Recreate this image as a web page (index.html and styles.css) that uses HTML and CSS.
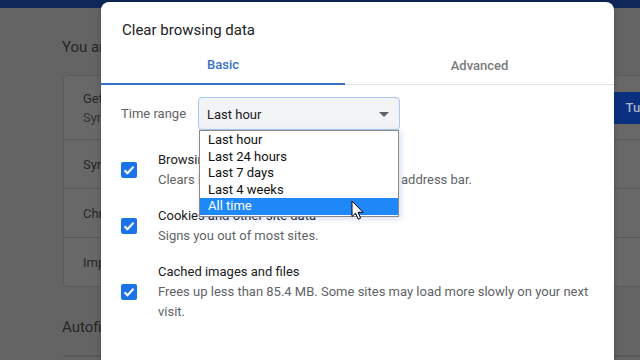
FILE: index.html
```html
<!DOCTYPE html>
<html>
<head>
<meta charset="utf-8">
<link rel="stylesheet" href="styles.css">
</head>
<body>
<div class="page">
  <div class="topbar"></div>
  <div class="main">
    <div class="section-title">You and Google</div>
    <div class="card">
      <div class="row row-tall">
        <div class="row-text">
          <div>Get Google smarts in Chrome</div>
          <div>Sync and personalize Chrome across your devices</div>
        </div>
        <div class="sync-btn">Turn on sync...</div>
      </div>
      <div class="row">Sync and Google services</div>
      <div class="row">Chrome name and picture</div>
      <div class="row">Import bookmarks and settings</div>
    </div>
    <div class="section-title section-two">Autofill</div>
    <div class="card"></div>
  </div>
</div>

<div class="dialog">
  <div class="dialog-title">Clear browsing data</div>
  <div class="tabs">
    <div class="tab tab-basic active">Basic</div>
    <div class="tab tab-adv">Advanced</div>
  </div>
  <div class="dialog-body">
    <div class="range-row">
      <span class="range-label">Time range</span>
      <div class="select-wrap">
        <div class="select">
          <span>Last hour</span>
          <svg class="arrow" width="10" height="5" viewBox="0 0 10 5"><path d="M0 0H10L5 5Z" fill="#5f6368"/></svg>
        </div>
        <ul class="listbox">
          <li>Last hour</li>
          <li>Last 24 hours</li>
          <li>Last 7 days</li>
          <li>Last 4 weeks</li>
          <li class="sel">All time</li>
        </ul>
      </div>
    </div>

    <div class="item">
      <div class="check"><svg width="12" height="10" viewBox="0 0 12 10"><path d="M1.5 5.2L4.5 8.2L10.5 1.8" fill="none" stroke="#fff" stroke-width="2"/></svg></div>
      <div class="item-text">
        <div class="item-title">Browsing history</div>
        <div class="item-sub">Clears history and autocompletions in the address bar.</div>
      </div>
    </div>
    <div class="item">
      <div class="check"><svg width="12" height="10" viewBox="0 0 12 10"><path d="M1.5 5.2L4.5 8.2L10.5 1.8" fill="none" stroke="#fff" stroke-width="2"/></svg></div>
      <div class="item-text">
        <div class="item-title">Cookies and other site data</div>
        <div class="item-sub">Signs you out of most sites.</div>
      </div>
    </div>
    <div class="item">
      <div class="check"><svg width="12" height="10" viewBox="0 0 12 10"><path d="M1.5 5.2L4.5 8.2L10.5 1.8" fill="none" stroke="#fff" stroke-width="2"/></svg></div>
      <div class="item-text">
        <div class="item-title">Cached images and files</div>
        <div class="item-sub">Frees up less than 85.4 MB. Some sites may load more slowly on your next visit.</div>
      </div>
    </div>
  </div>
</div>

<svg class="cursor" width="14" height="21" viewBox="0 0 14 21">
  <path d="M1 1V16.5L4.6 13.2L7.2 19.2L9.6 18.2L7.1 12.3H12Z" fill="#fff" stroke="#000" stroke-width="1" stroke-linejoin="round"/>
</svg>
</body>
</html>
```

FILE: styles.css
```css
html, body {
  margin: 0;
  padding: 0;
}
body {
  width: 640px;
  height: 360px;
  overflow: hidden;
  background: #646464;
  font-family: Roboto, "Liberation Sans", Arial, sans-serif;
  position: relative;
}
.page {
  width: 640px;
  height: 360px;
  overflow: hidden;
}
.topbar {
  height: 8px;
  background: #0e285a;
}
.main {
  padding-left: 62px;
  padding-top: 29px;
}
.section-title {
  font-size: 15px;
  color: #262626;
  height: 20px;
  line-height: 20px;
}
.section-two {
  margin-top: 30px;
}
.card {
  margin-top: 18px;
  margin-left: 1px;
  width: 683px;
  background: #686868;
  border: 1px solid #5a5a5a;
  border-radius: 4px;
  box-sizing: border-box;
}
.row {
  height: 48px;
  display: flex;
  align-items: center;
  padding-left: 19px;
  font-size: 13px;
  color: #262626;
  border-top: 1px solid #5a5a5a;
}
.row-tall {
  height: 63px;
  border-top: none;
  padding-right: 20px;
  justify-content: space-between;
}
.row-text {
  line-height: 19px;
}
.row-text div + div {
  color: #333;
}
.sync-btn {
  height: 32px;
  line-height: 32px;
  padding: 0 14px;
  background: #0c3080;
  color: #a9b4c8;
  font-size: 13px;
  font-weight: 500;
  border-radius: 4px;
}

/* dialog */
.dialog {
  position: absolute;
  left: 101px;
  top: 2px;
  width: 513px;
  height: 380px;
  background: #fff;
  border-radius: 8px;
  box-shadow: 0 0 6px rgba(0,0,0,0.25);
}
.dialog-title {
  padding: 18px 0 0 21px;
  height: 26px;
  font-size: 15px;
  color: #202124;
  line-height: 20px;
}
.tabs {
  display: flex;
  height: 38px;
  border-bottom: 1px solid #e3e3e3;
}
.tab {
  display: flex;
  align-items: center;
  justify-content: center;
  font-size: 13px;
  font-weight: 500;
  color: #5f6368;
  box-sizing: border-box;
}
.tab-basic {
  width: 244px;
  color: #3a70c6;
  border-bottom: 2px solid #3a70c6;
  margin-bottom: -1px;
}
.tab-adv {
  flex: 1;
  color: #7a7a7a;
}
.dialog-body {
  padding: 12px 0 0 20px;
}
.range-row {
  display: flex;
  align-items: center;
  height: 33px;
}
.range-label {
  font-size: 13px;
  color: #5f6368;
  width: 77px;
}
.select-wrap {
  position: relative;
}
.select {
  width: 202px;
  height: 33px;
  box-sizing: border-box;
  border: 1px solid #a8c6f0;
  border-radius: 4px;
  background: #f1f3f4;
  display: flex;
  align-items: center;
  justify-content: space-between;
  padding: 1px 10px 0 8px;
  font-size: 13px;
  color: #202124;
}
.arrow {
  display: block;
}
.listbox {
  position: absolute;
  left: 1px;
  top: 33px;
  width: 200px;
  margin: 0;
  padding: 1px 0 1px 0;
  list-style: none;
  background: #fff;
  border: 1px solid #8a8a8a;
  box-sizing: border-box;
  box-shadow: 2px 2px 6px rgba(80,120,200,0.25);
  z-index: 2;
}
.listbox li {
  height: 16.5px;
  line-height: 16.5px;
  font-size: 13px;
  color: #111;
  padding-left: 8px;
}
.listbox li.sel {
  background: #1e88f8;
  color: #fff;
}
.item {
  display: flex;
  align-items: center;
  margin-top: 16px;
}
.range-row + .item {
  margin-top: 20px;
}
.check {
  width: 16px;
  height: 16px;
  border-radius: 2px;
  background: #1a73e8;
  display: flex;
  align-items: center;
  justify-content: center;
  margin-right: 21px;
  flex: none;
}
.item-text {
  font-size: 13px;
  line-height: 20px;
  width: 440px;
}
.item-title {
  color: #202124;
}
.item-sub {
  color: #5f6368;
}
.cursor {
  position: absolute;
  left: 351px;
  top: 200px;
  z-index: 5;
}
```
